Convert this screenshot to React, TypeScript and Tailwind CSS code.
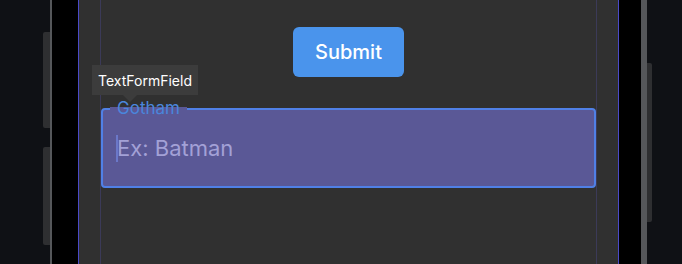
export default function App() {
  return (
    <div
      className="flex h-[264px] w-[682px] overflow-hidden bg-[#0f1115]"
      style={{ fontFamily: 'Inter, "Noto Sans", sans-serif' }}
    >
      {/* left frame */}
      <div className="flex w-[43px] shrink-0" />
      <div className="flex w-[7px] shrink-0 flex-col gap-[19px] pt-[32px]">
        <div className="h-[96px] rounded-l-[2px] bg-[#2e2f31]" />
        <div className="h-[98px] rounded-l-[2px] bg-[#2e2f31]" />
      </div>
      <div className="w-[2px] shrink-0 bg-[#55575a]" />
      <div className="w-[26px] shrink-0 bg-black" />
      <div className="w-[1px] shrink-0 bg-[#4a4ac8]" />

      {/* screen */}
      <div className="relative flex w-[539px] shrink-0 bg-[#303030]">
        <div className="ml-[21px] w-[1px] shrink-0 bg-[#3b3a58]" />
        <div className="flex w-[495px] shrink-0 flex-col items-center">
          <button className="mt-[27px] h-[50px] w-[111px] rounded-[6px] bg-[#4a94ec] text-[20px] font-medium text-white">
            Submit
          </button>
          <div className="relative mt-[31px] h-[80px] w-[495px] rounded-[4px] border-2 border-[#5080e6] bg-[#5a5896]">
            <span className="absolute -top-[12px] left-[7px] bg-[linear-gradient(to_bottom,transparent_9px,#5a5896_9px)] px-[7px] text-[17px] leading-[20px] text-[#4a86dc]">
              Gotham
            </span>
            <div className="flex h-full items-center pl-[13px]">
              <div className="h-[27px] w-[2px] bg-[#6b78c9]" />
              <span className="ml-[-1px] text-[22px] text-[#a3a1d6]">Ex: Batman</span>
            </div>
          </div>
        </div>
        <div className="w-[1px] shrink-0 bg-[#3b3a58]" />

        {/* tooltip */}
        <div className="absolute left-[13px] top-[65px] flex h-[30px] w-[106px] items-center justify-center bg-[#3c3c3c] text-[14px] text-white">
          TextFormField
          <div className="absolute left-[31px] top-[30px] h-0 w-0 border-x-[7px] border-t-[7px] border-x-transparent border-t-[#3c3c3c]" />
        </div>
      </div>

      <div className="w-[1px] shrink-0 bg-[#4a4ac8]" />
      <div className="w-[22px] shrink-0 bg-black" />
      <div className="w-[6px] shrink-0 bg-[#55575a]" />
      <div className="flex w-[5px] shrink-0 flex-col pt-[63px]">
        <div className="h-[159px] rounded-r-[2px] bg-[#2e2f31]" />
      </div>
    </div>
  );
}
